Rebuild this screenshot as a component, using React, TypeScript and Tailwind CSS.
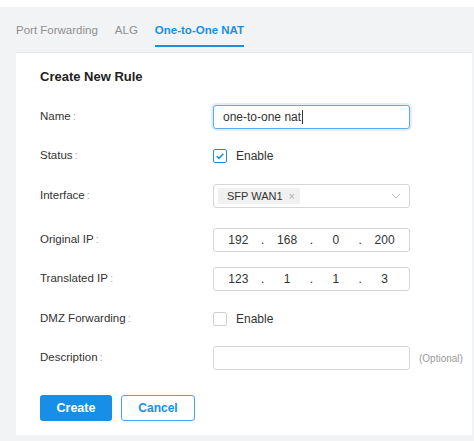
import React from "react";

const font = { fontFamily: '"Liberation Sans", Arial, sans-serif' };

function Label({ text }: { text: string }) {
  return (
    <div className="w-[173px] shrink-0 text-[11.5px] text-[#333]">
      {text}
      <span className="ml-[2px] text-[#aaa]">:</span>
    </div>
  );
}

function Row({ label, children, className = "" }: { label: string; children?: React.ReactNode; className?: string }) {
  return (
    <div className={"flex h-[24px] items-center " + className}>
      <Label text={label} />
      {children}
    </div>
  );
}

function Checkbox({ checked }: { checked?: boolean }) {
  return (
    <div
      className={
        "flex h-[14px] w-[14px] items-center justify-center rounded-[2px] border bg-white " +
        (checked ? "border-[#1a8fe3]" : "border-[#cfcfcf]")
      }
    >
      {checked && (
        <svg width="10" height="10" viewBox="0 0 10 10">
          <path d="M1.8 5.2 L4 7.3 L8.3 2.8" fill="none" stroke="#1a8fe3" strokeWidth="1.6" />
        </svg>
      )}
    </div>
  );
}

function IpInput({ parts }: { parts: string[] }) {
  return (
    <div className="flex h-[24px] w-[197px] items-center rounded-[3px] border border-[#d6d6d6] bg-white px-[4px] text-[12px] text-[#333]">
      {parts.map((p, i) => (
        <React.Fragment key={i}>
          {i > 0 && <div className="w-[8px] text-center">.</div>}
          <div className="flex-1 text-center">{p}</div>
        </React.Fragment>
      ))}
    </div>
  );
}

export default function App() {
  return (
    <div className="h-[441px] w-[474px] overflow-hidden bg-white" style={font}>
      <div className="mt-[7px] h-[434px] bg-[#f2f3f5] pl-[16px] pr-[2px]">
        <div className="flex h-[46px] items-end gap-[17px] border-b border-[#e8e9eb] text-[11.5px]">
          <div className="pb-[13px] text-[#8f8f8f]">Port Forwarding</div>
          <div className="pb-[13px] text-[#8f8f8f]">ALG</div>
          <div className="flex flex-col">
            <div className="pb-[6px] text-[11.5px] font-bold text-[#1a8fe3]">One-to-One NAT</div>
            <div className="mb-[5px] h-[2px] bg-[#1a8fe3]" />
          </div>
        </div>
        <div className="h-[382px] bg-white pl-[24px] pt-[15px]">
          <div className="h-[18px] text-[13px] font-bold leading-[18px] text-[#222]">Create New Rule</div>
          <div className="mt-[19px] flex flex-col gap-[15px]">
            <Row label="Name">
              <div className="flex h-[24px] w-[197px] items-center rounded-[3px] border border-[#5fa9ec] bg-white pl-[9px] text-[12px] text-[#333] shadow-[0_0_0_2px_rgba(90,168,238,0.18)]">
                one-to-one nat<span className="ml-[1px] inline-block h-[14px] w-px bg-[#333]" />
              </div>
            </Row>
            <Row label="Status" className="mb-[1px]">
              <Checkbox checked />
              <span className="ml-[9px] text-[12px] text-[#333]">Enable</span>
            </Row>
            <Row label="Interface" className="mb-[5px]">
              <div className="flex h-[24px] w-[197px] items-center rounded-[3px] border border-[#d6d6d6] bg-white pl-[4px] pr-[8px]">
                <div className="flex h-[16px] items-center rounded-[2px] bg-[#f0f0f0] pl-[9px] pr-[6px] text-[11px] text-[#333]">
                  SFP WAN1
                  <span className="ml-[6px] text-[10px] text-[#aaa]">×</span>
                </div>
                <div className="flex-1" />
                <svg width="10" height="6" viewBox="0 0 10 6">
                  <path d="M1 1 L5 5 L9 1" fill="none" stroke="#bbb" strokeWidth="1" />
                </svg>
              </div>
            </Row>
            <Row label="Original IP">
              <IpInput parts={["192", "168", "0", "200"]} />
            </Row>
            <Row label="Translated IP" className="mb-[1px]">
              <IpInput parts={["123", "1", "1", "3"]} />
            </Row>
            <Row label="DMZ Forwarding">
              <Checkbox />
              <span className="ml-[9px] text-[12px] text-[#333]">Enable</span>
            </Row>
            <Row label="Description">
              <div className="h-[24px] w-[197px] rounded-[3px] border border-[#d6d6d6] bg-white" />
              <span className="ml-[9px] text-[10px] text-[#9a9a9a]">(Optional)</span>
            </Row>
          </div>
          <div className="mt-[25px] flex gap-[9px]">
            <button className="flex h-[26px] w-[72px] items-center justify-center rounded-[3px] bg-[#188fe6] text-[12.5px] font-bold text-white">
              Create
            </button>
            <button className="flex h-[26px] w-[74px] items-center justify-center rounded-[3px] border border-[#4aa3ea] bg-white text-[12px] font-bold text-[#1a8fe3]">
              Cancel
            </button>
          </div>
        </div>
      </div>
    </div>
  );
}
